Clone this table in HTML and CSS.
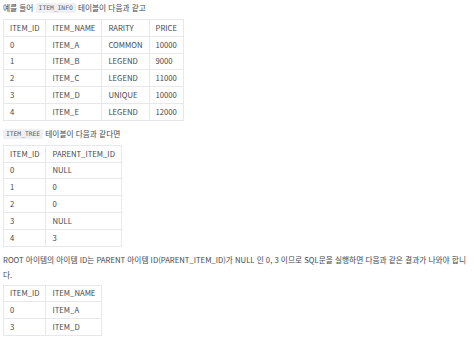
FILE: index.html
```html
<!DOCTYPE html>
<html lang="ko">
<head>
<meta charset="utf-8">
<link rel="stylesheet" href="styles.css">
</head>
<body>
<div class="doc">
  <p class="line">예를 들어 <code>ITEM_INFO</code> 테이블이 다음과 같고</p>
  <table class="tbl">
    <tr><th>ITEM_ID</th><th>ITEM_NAME</th><th>RARITY</th><th>PRICE</th></tr>
    <tr><td>0</td><td>ITEM_A</td><td>COMMON</td><td>10000</td></tr>
    <tr><td>1</td><td>ITEM_B</td><td>LEGEND</td><td>9000</td></tr>
    <tr><td>2</td><td>ITEM_C</td><td>LEGEND</td><td>11000</td></tr>
    <tr><td>3</td><td>ITEM_D</td><td>UNIQUE</td><td>10000</td></tr>
    <tr><td>4</td><td>ITEM_E</td><td>LEGEND</td><td>12000</td></tr>
  </table>
  <p class="line"><code>ITEM_TREE</code> 테이블이 다음과 같다면</p>
  <table class="tbl">
    <tr><th>ITEM_ID</th><th>PARENT_ITEM_ID</th></tr>
    <tr><td>0</td><td>NULL</td></tr>
    <tr><td>1</td><td>0</td></tr>
    <tr><td>2</td><td>0</td></tr>
    <tr><td>3</td><td>NULL</td></tr>
    <tr><td>4</td><td>3</td></tr>
  </table>
  <p class="para">ROOT 아이템의 아이템 ID는 PARENT 아이템 ID(PARENT_ITEM_ID)가 NULL 인 0, 3 이므로 SQL문을 실행하면 다음과 같은 결과가 나와야 합니다.</p>
  <table class="tbl tbl-last">
    <tr><th>ITEM_ID</th><th>ITEM_NAME</th></tr>
    <tr><td>0</td><td>ITEM_A</td></tr>
    <tr><td>3</td><td>ITEM_D</td></tr>
  </table>
</div>
</body>
</html>
```
FILE: styles.css
```css
html, body {
  margin: 0;
  padding: 0;
  background: #fff;
}
.doc {
  padding: 0 3px;
  font-family: "Noto Sans CJK KR", "Noto Sans", sans-serif;
  font-size: 7.7px;
  color: #44474c;
}
.line {
  margin: 0;
  height: 15px;
  line-height: 15px;
}
.para {
  margin: 5px 0 0;
  line-height: 15px;
  word-break: break-all;
}
code {
  display: inline-block;
  font-family: "DejaVu Sans Mono", monospace;
  font-size: 6.3px;
  line-height: 10px;
  background: #eef0f3;
  color: #5a5e66;
  padding: 0 3px;
  border-radius: 2px;
  vertical-align: 1px;
}
.tbl {
  border-collapse: collapse;
  margin: 4px 0 5px;
}
.tbl-last {
  margin-top: 3px;
}
.tbl th, .tbl td {
  border: 1px solid #e6e8eb;
  font-weight: normal;
  text-align: left;
  padding: 0 6px;
  height: 15.8px;
  line-height: 10px;
  white-space: nowrap;
}
```
